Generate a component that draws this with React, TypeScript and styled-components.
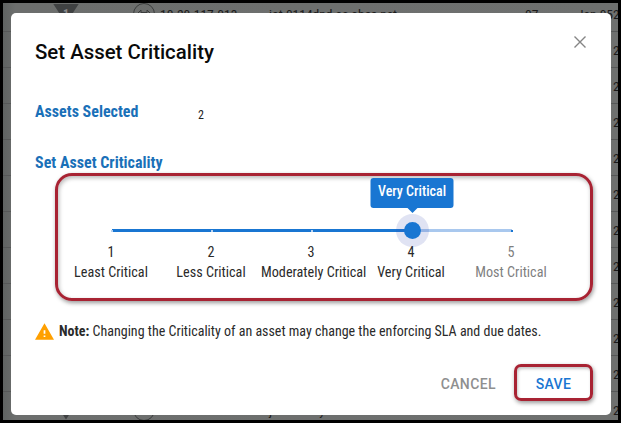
import React from "react";
import styled, { createGlobalStyle } from "styled-components";

const Global = createGlobalStyle`
  html, body { margin: 0; padding: 0; background: #000; }
  body { width: 621px; height: 423px; overflow: hidden; font-family: Roboto, "Liberation Sans", sans-serif; }
`;

const Frame = styled.div`
  position: relative;
  width: 621px;
  height: 423px;
  box-sizing: border-box;
  padding: 3px;
  background: #000;
`;

const Backdrop = styled.div`
  height: 417px;
  overflow: hidden;
  background: linear-gradient(90deg, #5f6362 0, #6c6e6d 2%, #6e706f 100%);
  display: flex;
  flex-direction: column;
`;

const BgRow = styled.div`
  flex: none;
  height: 36px;
  box-sizing: border-box;
  border-bottom: 1px solid #565858;
  display: grid;
  grid-template-columns: 50px 26px 54px 27px 109px 256px 52px 36px auto;
  align-items: center;
  color: #1b1b1b;
  font-size: 13.5px;
  font-stretch: 75%;
  white-space: nowrap;
  &:first-child { margin-top: -7px; }
`;

const Pin = styled.div`
  grid-column: 2;
  width: 26px;
  height: 20px;
  background: #3f4142;
  clip-path: polygon(0 0, 100% 0, 75% 50%, 50% 100%, 25% 50%);
  color: #8a8a8a;
  font-size: 12px;
  font-weight: 700;
  line-height: 20px;
  text-align: center;
`;

const Ring = styled.div`
  grid-column: 4;
  width: 22px;
  height: 22px;
  color: #3a3c3c;
  svg { display: block; }
`;

const Dialog = styled.div`
  position: absolute;
  left: 11px;
  top: 13px;
  width: 600px;
  height: 402px;
  box-sizing: border-box;
  background: #fff;
  border-radius: 5px;
  padding: 27px 18px 14px 24px;
  display: flex;
  flex-direction: column;
`;

const Header = styled.div`
  display: flex;
  justify-content: space-between;
  align-items: flex-start;
`;

const Title = styled.h2`
  margin: 0;
  font-size: 20.4px;
  line-height: 24px;
  font-weight: 500;
  color: #0a0a0a;
`;

const Close = styled.button`
  border: 0;
  padding: 0;
  margin: -6px 5px 0 0;
  width: 16px;
  height: 16px;
  background: none;
  color: #858585;
  display: flex;
`;

const InfoRow = styled.div`
  display: flex;
  align-items: flex-end;
  margin-top: 38px;
  height: 20px;
`;

const Heading = styled.div`
  font-size: 16px;
  line-height: 20px;
  font-weight: 700;
  font-stretch: 75%;
  color: #1a70b8;
  width: 163px;
`;

const Count = styled.div`
  font-size: 12px;
  line-height: 14px;
  color: #222;
  font-stretch: 75%;
`;

const SectionHeading = styled(Heading)`
  margin-top: 31px;
  width: auto;
`;

const Callout = styled.div`
  width: 538px;
  height: 128px;
  margin-left: 20px;
  box-sizing: border-box;
  border: 3px solid #a82333;
  border-radius: 17px;
  box-shadow: 1px 2px 4px rgba(0, 0, 0, 0.4), inset 1px 2px 4px rgba(0, 0, 0, 0.28);
  padding: 53px 0 0 54px;
`;

const Track = styled.div`
  position: relative;
  width: 400px;
  height: 3px;
  background: #a9c8ee;
`;

const TrackFill = styled.div`
  height: 100%;
  background: #1976d2;
`;

const Mark = styled.i<{ $active: boolean }>`
  position: absolute;
  top: 0.5px;
  width: 2px;
  height: 2px;
  margin-left: -1px;
  background: ${(p) => (p.$active ? "#b9d3f0" : "#1976d2")};
`;

const Thumb = styled.div`
  position: absolute;
  top: -7px;
  width: 17px;
  height: 17px;
  margin-left: -8.5px;
  border-radius: 50%;
  background: #1976d2;
  box-shadow: 0 0 0 8px rgba(63, 81, 181, 0.16);
`;

const Bubble = styled.div`
  position: absolute;
  bottom: 31px;
  left: 50%;
  transform: translateX(-50%);
  width: 83px;
  height: 30px;
  border-radius: 3px;
  background: #1976d2;
  color: #fff;
  font-size: 14px;
  font-weight: 500;
  font-stretch: 75%;
  line-height: 27px;
  text-align: center;
  white-space: nowrap;
  &::after {
    content: "";
    position: absolute;
    left: 50%;
    top: 100%;
    margin: -1px 0 0 -6px;
    border: 6px solid transparent;
    border-bottom: 0;
    border-top-color: #1976d2;
  }
`;

const Labels = styled.div`
  display: flex;
  margin: 10px 0 0 -51px;
`;

const Label = styled.div<{ $muted: boolean }>`
  width: 100px;
  text-align: center;
  font-size: 14.2px;
  font-stretch: 75%;
  line-height: 20px;
  color: ${(p) => (p.$muted ? "#7f7f7f" : "#2a2a2a")};
  white-space: nowrap;
  span { display: block; }
`;

const Note = styled.div`
  display: flex;
  align-items: center;
  gap: 5px;
  margin-top: 20px;
  font-size: 14px;
  line-height: 20px;
  font-stretch: 75%;
  color: #2a2a2a;
  svg { flex: none; }
  b { font-weight: 700; }
`;

const Actions = styled.div`
  margin-top: auto;
  display: flex;
  justify-content: flex-end;
  align-items: center;
`;

const Button = styled.button<{ $primary?: boolean }>`
  border: 0;
  background: none;
  padding: 2px 0 0;
  font: 500 14px/20px Roboto, sans-serif;
  letter-spacing: 0.4px;
  color: ${(p) => (p.$primary ? "#1976d2" : "#8f8f8f")};
`;

const SaveCallout = styled.div`
  width: 79px;
  height: 37px;
  box-sizing: border-box;
  margin-left: 18px;
  border: 3px solid #a82333;
  border-radius: 7px;
  box-shadow: 1px 2px 4px rgba(0, 0, 0, 0.4), inset 1px 2px 3px rgba(0, 0, 0, 0.22);
  display: flex;
  align-items: center;
  justify-content: center;
`;

const levels = ["Least Critical", "Less Critical", "Moderately Critical", "Very Critical", "Most Critical"];
const current = 4;

export default function App() {
  return (
    <Frame>
      <Global />
      <Backdrop>
        {Array.from({ length: 12 }, (_, i) => (
          <BgRow key={i}>
            <Pin>{i === 0 ? "1" : ""}</Pin>
            <Ring>
              <svg width="22" height="22" viewBox="0 0 22 22" fill="none" stroke="currentColor" strokeWidth="1">
                <circle cx="11" cy="11" r="10.5" />
                <path d="M4 11l4-4v2.5h6V7l4 4-4 4v-2.5H8V15z" />
              </svg>
            </Ring>
            <span>{i === 0 ? "10.20.117.013" : ""}</span>
            <span>{i === 0 ? "jot 0114dnd ee ohcc net" : i === 11 ? "jot 01144y" : ""}</span>
            <span>{i === 0 ? "07" : ""}</span>
            <span>{i === 0 ? "Jan 05" : ""}</span>
            <span>2</span>
          </BgRow>
        ))}
      </Backdrop>
      <Dialog>
        <Header>
          <Title>Set Asset Criticality</Title>
          <Close aria-label="Close">
            <svg width="16" height="16" viewBox="0 0 16 16" fill="none" stroke="currentColor" strokeWidth="1.4">
              <path d="M2.5 2.5l11 11M13.5 2.5l-11 11" />
            </svg>
          </Close>
        </Header>
        <InfoRow>
          <Heading>Assets Selected</Heading>
          <Count>2</Count>
        </InfoRow>
        <SectionHeading>Set Asset Criticality</SectionHeading>
        <Callout>
          <Track>
            <TrackFill style={{ width: `${((current - 1) / 4) * 100}%` }} />
            {levels.map((_, i) => (
              <Mark key={i} $active={i + 1 < current} style={{ left: `${(i / 4) * 100}%` }} />
            ))}
            <Thumb style={{ left: `${((current - 1) / 4) * 100}%` }}>
              <Bubble>{levels[current - 1]}</Bubble>
            </Thumb>
          </Track>
          <Labels>
            {levels.map((l, i) => (
              <Label key={l} $muted={i + 1 > current}>
                <span>{i + 1}</span>
                <span>{l}</span>
              </Label>
            ))}
          </Labels>
        </Callout>
        <Note>
          <svg width="19" height="17" viewBox="1 2 22 19" fill="#ffa000">
            <path d="M1 21h22L12 2 1 21zm12-3h-2v-2h2v2zm0-4h-2v-4h2v4z" />
          </svg>
          <span>
            <b>Note:</b> Changing the Criticality of an asset may change the enforcing SLA and due dates.
          </span>
        </Note>
        <Actions>
          <Button>CANCEL</Button>
          <SaveCallout>
            <Button $primary>SAVE</Button>
          </SaveCallout>
        </Actions>
      </Dialog>
    </Frame>
  );
}
